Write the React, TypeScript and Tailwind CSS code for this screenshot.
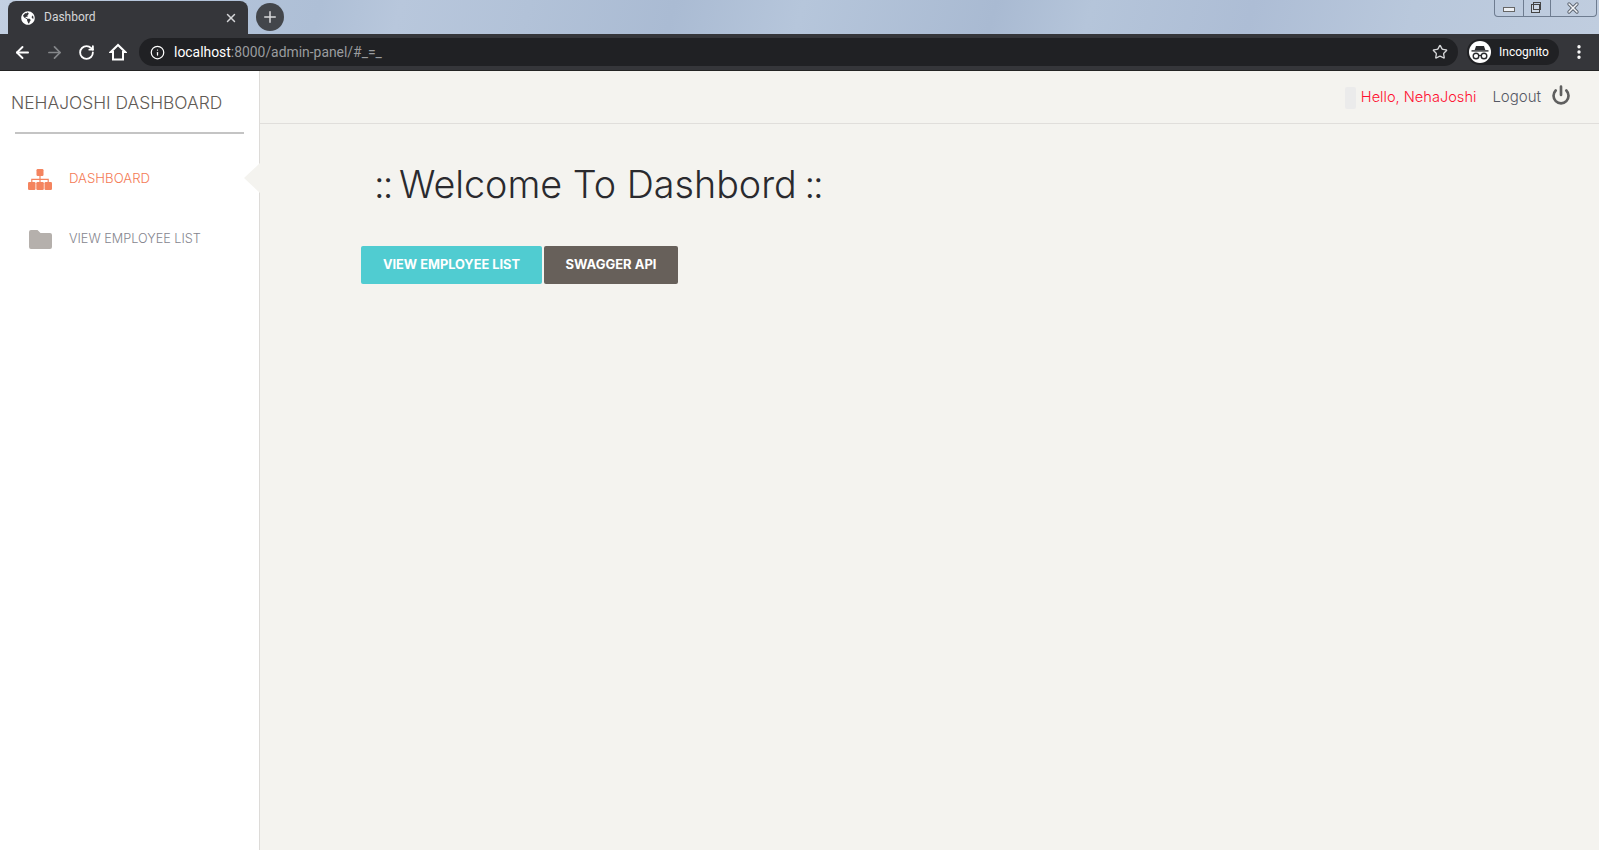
import { ArrowLeft, ArrowRight, RotateCw, Info, Star, Plus, X, Power, EllipsisVertical } from 'lucide-react';
import { FaGlobeAmericas } from 'react-icons/fa';

function SitemapIcon() {
  return (
    <svg width="24" height="21" viewBox="0 0 24 21" fill="#f4845f">
      <rect x="8.5" y="0" width="7" height="7" rx="1.2" />
      <rect x="0" y="13" width="7.5" height="8" rx="1.2" />
      <rect x="8.3" y="13" width="7.5" height="8" rx="1.2" />
      <rect x="16.5" y="13" width="7.5" height="8" rx="1.2" />
      <path d="M11.4 7h1.2v2.8h8.2V13h-1.2v-2H12.6v2h-1.2v-2H4.4v2H3.2V9.8h8.2z" />
    </svg>
  );
}

function FolderIcon() {
  return (
    <svg width="23" height="19" viewBox="0 0 23 19" fill="#b5b0ac">
      <path d="M2 0h6.5l3 3H21a2 2 0 0 1 2 2v12a2 2 0 0 1-2 2H2a2 2 0 0 1-2-2V2a2 2 0 0 1 2-2z" />
    </svg>
  );
}

function IncognitoIcon() {
  return (
    <svg width="18" height="15" viewBox="0 0 18 15" fill="none">
      <path d="M5 1h8l1.3 4H3.7z" fill="#2a2b2e" />
      <rect x="0.5" y="5.2" width="17" height="1.4" fill="#2a2b2e" />
      <circle cx="5" cy="11" r="2.8" stroke="#2a2b2e" strokeWidth="1.4" />
      <circle cx="13" cy="11" r="2.8" stroke="#2a2b2e" strokeWidth="1.4" />
      <path d="M7.8 10.5h2.4" stroke="#2a2b2e" strokeWidth="1.2" />
    </svg>
  );
}

function HomeIcon() {
  return (
    <svg width="18" height="18" viewBox="0 0 18 18" fill="none" stroke="#fff" strokeWidth="2">
      <path d="M9 2 1.8 9H4v7.5h10V9h2.2z" strokeLinejoin="miter" />
    </svg>
  );
}

function CloseGlyph() {
  return (
    <div className="relative w-[15px] h-[12px]">
      <X size={16} strokeWidth={5} className="absolute left-[-1px] top-[-2px] text-[#5c6470]" />
      <X size={16} strokeWidth={2.2} className="absolute left-[-1px] top-[-2px] text-[#f2f4f7]" />
    </div>
  );
}

function BrowserChrome() {
  return (
    <div className="shrink-0 font-['Roboto',sans-serif]">
      <div className="relative h-[34px] flex items-end overflow-hidden bg-[linear-gradient(105deg,#c3d0e2_0%,#b4c4da_10%,#aebfd6_20%,#b8c7dc_25%,#b2c2d8_33%,#aabbd3_42%,#b6c6db_50%,#a9bad2_62%,#b5c5da_68%,#adbdd5_78%,#b9c8dc_88%,#c0cddf_100%)]">
        <div className="ml-2 w-[240px] h-[33px] bg-[#35363a] rounded-t-[8px] flex items-center pl-[13px] pr-[10px] text-[#d5d6d8]">
          <FaGlobeAmericas size={14} className="text-white" />
          <span className="ml-[9px] text-[12px] mb-[1px]">Dashbord</span>
          <X size={14} className="ml-auto" strokeWidth={2.5} />
        </div>
        <div className="ml-2 mb-[3px] w-7 h-7 rounded-full bg-[#43464b] flex items-center justify-center text-[#d9dadb]">
          <Plus size={18} strokeWidth={2} />
        </div>
        <div className="absolute right-[2px] top-0 h-[17px] w-[103px] flex border border-t-0 border-[#6e7c90] rounded-b-[4px]">
          <div className="w-[29px] flex items-center justify-center border-r border-[#6e7c90]">
            <div className="w-[12px] h-[5px] mt-[3px] border border-[#666] bg-[#eef1f5]" />
          </div>
          <div className="w-[27px] flex items-center justify-center border-r border-[#6e7c90]">
            <div className="relative w-[9px] h-[9px] mt-[1px] mr-[3px] border border-[#444] bg-[#cdd7e5]">
              <div className="absolute left-[1px] top-[-3px] w-[8px] h-[8px] border border-[#444]" />
            </div>
          </div>
          <div className="flex-1 flex items-center justify-center">
            <CloseGlyph />
          </div>
        </div>
      </div>
      <div className="h-[37px] bg-[#35363a] flex items-center pl-[13px] pr-[11px] border-b border-[#232323]">
        <ArrowLeft size={19} className="text-white" strokeWidth={2.4} />
        <ArrowRight size={19} className="ml-[13px] text-[#85878a]" strokeWidth={2.2} />
        <RotateCw size={17} className="ml-[14px] text-white" strokeWidth={2.6} />
        <div className="ml-[14px]"><HomeIcon /></div>
        <div className="ml-[12px] flex-1 h-[28px] rounded-full bg-[#202124] flex items-center pl-[11px] pr-[10px]">
          <Info size={15} className="text-white" strokeWidth={2} />
          <span className="ml-[9px] text-[13.9px] text-white">localhost<span className="text-[#9a9c9f]">:8000/admin-panel/#_=_</span></span>
          <Star size={16} className="ml-auto text-[#d5d6d8]" strokeWidth={2} />
        </div>
        <div className="ml-[9px] h-[26px] w-[92px] rounded-full bg-[#202124] flex items-center pl-[1px]">
          <div className="w-[22px] h-[22px] ml-[1px] rounded-full bg-white flex items-center justify-center">
            <IncognitoIcon />
          </div>
          <span className="ml-[8px] text-[12px] text-white">Incognito</span>
        </div>
        <EllipsisVertical size={18} className="ml-[11px] text-white" strokeWidth={2.5} />
      </div>
    </div>
  );
}

function Sidebar() {
  return (
    <aside className="relative w-[260px] shrink-0 bg-white border-r border-[#dddbd8]">
      <div className="pl-[11px] pt-[22px] text-[17.4px] leading-[20px] font-light text-[#5f5a55]">NEHAJOSHI DASHBOARD</div>
      <div className="mx-[15px] mt-[19px] h-[2px] bg-[#c4c4c4]" />
      <nav className="mt-[23px]">
        <a className="flex items-center h-[44px] pl-[28px] text-[13.2px] font-light text-[#f47a55]">
          <SitemapIcon />
          <span className="ml-[17px]">DASHBOARD</span>
        </a>
        <a className="flex items-center h-[44px] mt-[16px] pl-[29px] text-[12.7px] font-light text-[#85858e]">
          <FolderIcon />
          <span className="ml-[17px]">VIEW EMPLOYEE LIST</span>
        </a>
      </nav>
      <div className="absolute right-[-1px] top-[92px] w-0 h-0 border-y-[15px] border-y-transparent border-r-[16px] border-r-[#f4f3ef]" />
    </aside>
  );
}

export default function App() {
  return (
    <div className="h-[850px] flex flex-col overflow-hidden font-['Inter',sans-serif] bg-[#f4f3ef]">
      <BrowserChrome />
      <div className="flex-1 flex min-h-0">
        <Sidebar />
        <main className="flex-1 flex flex-col">
          <header className="h-[53px] shrink-0 border-b border-[#e0dedb] flex items-center justify-end pt-[1px] pr-[28px] text-[14.6px] font-light">
            <div className="w-[11px] h-[22px] rounded-[2px] bg-[#ebebeb] mr-[5px]" />
            <span className="text-[#ff0f2f]">Hello, NehaJoshi</span>
            <span className="ml-[16px] text-[15px] text-[#555864]">Logout</span>
            <Power size={20} className="ml-[10px] mb-[5px] text-[#5f5f5f]" strokeWidth={3.2} />
          </header>
          <div className="pl-[101px] pt-[36px]">
            <h1 className="pl-[13px] text-[37.7px] leading-[48px] font-light text-[#2a2a2e]">
              <span className="tracking-[-2px] mr-[-3px]">::</span> Welcome To Dashbord <span className="tracking-[-2px] ml-[-3px]">::</span>
            </h1>
            <div className="mt-[38px] flex gap-[2px]">
              <button className="h-[38px] w-[181px] rounded-[2px] bg-[#50ccd1] text-white text-[12.8px] font-bold">VIEW EMPLOYEE LIST</button>
              <button className="h-[38px] w-[134px] rounded-[2px] bg-[#67605a] text-white text-[13px] font-bold">SWAGGER API</button>
            </div>
          </div>
        </main>
      </div>
    </div>
  );
}
